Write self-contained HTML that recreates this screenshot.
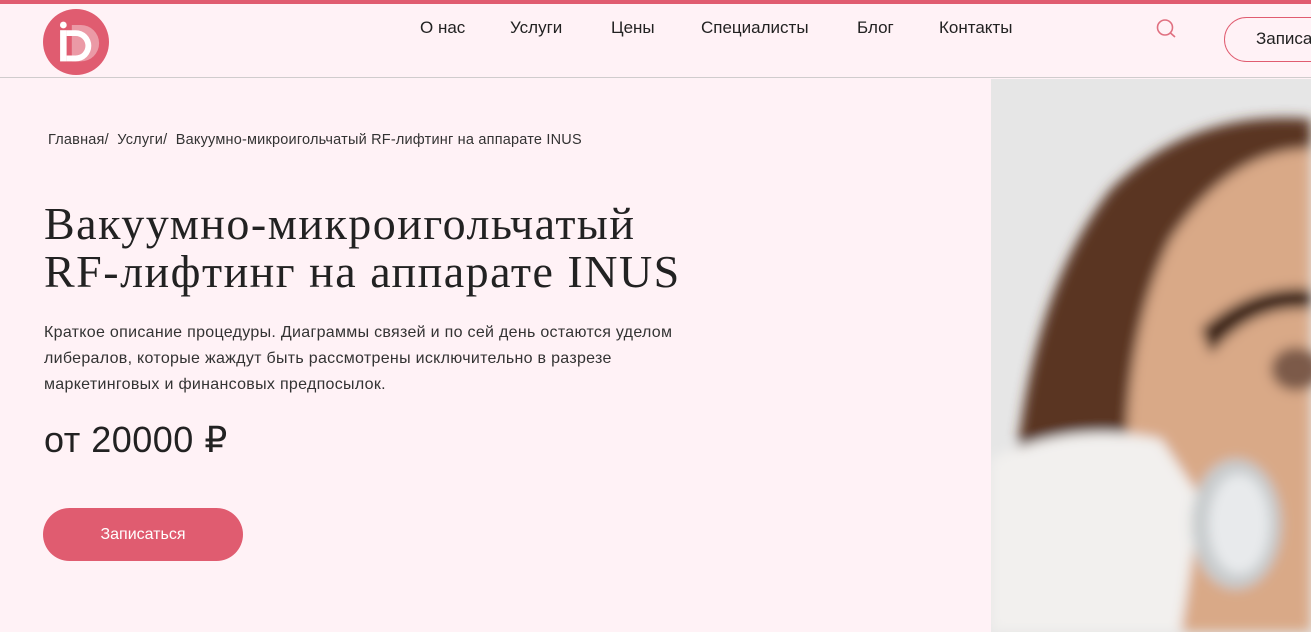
<!DOCTYPE html>
<html><head><meta charset="utf-8"><style>
*{margin:0;padding:0;box-sizing:border-box}
body{width:1311px;height:632px;overflow:hidden;background:#fff2f6;font-family:"Liberation Sans",sans-serif;color:#222;position:relative}
.top{position:absolute;left:0;top:0;width:1311px;height:4px;background:#e05c70}
.hdr{position:absolute;left:0;top:77px;width:1311px;height:1px;background:#d0cccd}
.logo{position:absolute;left:43px;top:9px;width:66px;height:66px;border-radius:50%;background:#e05c70}
nav a{position:absolute;top:18px;font-size:17px;color:#222;text-decoration:none}
.btn1{position:absolute;left:1224px;top:17px;width:140px;height:45px;border:1.5px solid #e05c70;border-radius:23px;font-size:17px;padding:11px 0 0 31px}
.bc{position:absolute;left:48px;top:132px;font-size:14.5px;color:#333;letter-spacing:0.2px}
h1{position:absolute;left:44px;top:200px;font-family:"Liberation Serif",serif;font-weight:normal;font-size:46px;line-height:48px;color:#222;letter-spacing:1.5px;white-space:nowrap}
.desc{position:absolute;left:44px;top:320px;font-size:16px;line-height:26px;color:#333;letter-spacing:0.3px;white-space:nowrap}
.price{position:absolute;left:44px;top:419px;font-size:36px;color:#222;letter-spacing:0.5px}
.btn2{position:absolute;left:43px;top:508px;width:200px;height:53px;border-radius:27px;background:#e05c70;color:#fff;font-size:16px;text-align:center;line-height:53px}
.img{position:absolute;left:991px;top:79px}
</style></head><body>
<div class="top"></div>
<div class="logo"><svg width="66" height="66" viewBox="0 0 66 66"><g transform="translate(-5 -10) scale(1.3)"><path d="M26 20h7a14 14 0 0 1 0 28h-7z" fill="#eb9aa6"/><rect x="17" y="24" width="5" height="24" fill="#fff"/><circle cx="19.5" cy="20" r="2.6" fill="#fff"/><path d="M22 48h7a12 12 0 0 0 0-24h-7v4.5h7a7.5 7.5 0 0 1 0 15h-7z" fill="#fff"/></g></svg></div>
<nav><a style="left:420px">О нас</a><a style="left:510px">Услуги</a><a style="left:611px">Цены</a><a style="left:701px">Специалисты</a><a style="left:857px">Блог</a><a style="left:939px">Контакты</a></nav>
<svg style="position:absolute;left:1155px;top:18px" width="24" height="22" viewBox="0 0 24 22"><circle cx="10" cy="9.5" r="7.5" fill="none" stroke="#e07080" stroke-width="1.6"/><path d="M15.5 15l4.5 4" stroke="#e07080" stroke-width="1.6"/></svg>
<div class="btn1">Записаться</div>
<div class="hdr"></div>
<div class="bc">Главная/&nbsp; Услуги/&nbsp; Вакуумно-микроигольчатый RF-лифтинг на аппарате INUS</div>
<h1>Вакуумно-микроигольчатый<br>RF-лифтинг на аппарате INUS</h1>
<div class="desc">Краткое описание процедуры. Диаграммы связей и по сей день остаются уделом<br>либералов, которые жаждут быть рассмотрены исключительно в разрезе<br>маркетинговых и финансовых предпосылок.</div>
<div class="price">от 20000 ₽</div>
<div class="btn2">Записаться</div>
<svg class="img" width="320" height="553" viewBox="0 0 320 553">
<defs><filter id="b"><feGaussianBlur stdDeviation="6"/></filter></defs>
<rect width="320" height="553" fill="#e6e6e6"/>
<g filter="url(#b)">
<path d="M20 553Q10 250 120 110Q200 30 320 40V553z" fill="#5a3424"/>
<path d="M150 553Q110 300 180 160Q240 70 320 70V553z" fill="#d9a987"/>
<path d="M210 250q50-45 110-40v20q-60-5-100 45z" fill="#3a2219"/>
<ellipse cx="305" cy="290" rx="25" ry="22" fill="#7c5a48"/>
<path d="M0 380q80-40 170-20l40 60-20 133H0z" fill="#f2f0ee"/>
<ellipse cx="245" cy="445" rx="45" ry="65" fill="#c8ccce"/>
<ellipse cx="248" cy="445" rx="30" ry="50" fill="#e8eaec"/>
</g>
</svg>
</body></html>
